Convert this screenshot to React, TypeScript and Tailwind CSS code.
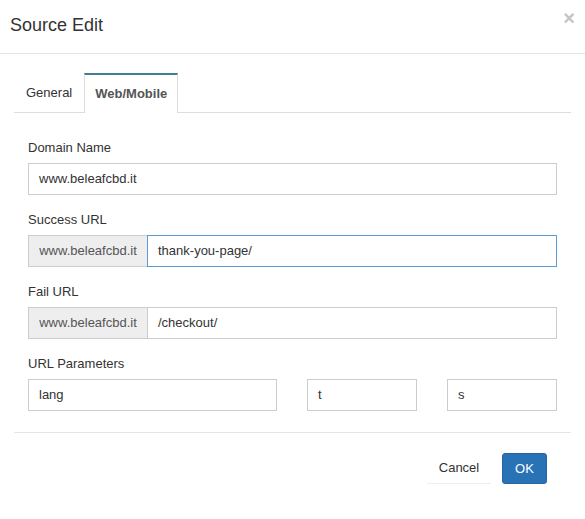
import React from "react";

function Label({ children }: { children: React.ReactNode }) {
  return <div className="leading-[20px] mb-[5px] text-[#333]">{children}</div>;
}

function Input({ value, focus = false, className = "" }: { value: string; focus?: boolean; className?: string }) {
  return (
    <div
      className={
        "h-[32px] flex items-center px-[10px] border bg-white text-[#333] " +
        (focus ? "border-[#5b9ad6] " : "border-[#cccccc] ") +
        className
      }
    >
      {value}
    </div>
  );
}

function Addon({ text }: { text: string }) {
  return (
    <div className="h-[32px] w-[120px] shrink-0 flex items-center justify-center border border-[#cccccc] bg-[#eeeeee] text-[#555]">
      {text}
    </div>
  );
}

export default function App() {
  return (
    <div className="w-[585px] h-[519px] bg-white text-[13px] text-[#333] font-['Liberation_Sans',Arial,sans-serif]">
      <div className="h-[54px] border-b border-[#e5e5e5] flex items-start justify-between pl-[10px] pr-[10px]">
        <div className="pt-[15px] text-[18px] leading-[20px] text-[#333]">Source Edit</div>
        <div className="pt-[8px] text-[20px] leading-[20px] font-bold text-[#c4c4c4]">×</div>
      </div>
      <div className="px-[14px]">
        <div className="mt-[19px] flex border-b border-[#dddddd] h-[40px]">
          <div className="h-[40px] flex items-center px-[12px] text-[#333]">General</div>
          <div className="h-[40px] -mb-px flex items-center px-[10px] bg-white border-x border-[#dddddd] border-t-2 border-t-[#3f7f8f] font-bold text-[#555]">
            Web/Mobile
          </div>
        </div>
        <div className="px-[14px] pt-[25px] pb-[6px]">
          <div className="mb-[15px]">
            <Label>Domain Name</Label>
            <Input value="www.beleafcbd.it" />
          </div>
          <div className="mb-[15px]">
            <Label>Success URL</Label>
            <div className="flex">
              <Addon text="www.beleafcbd.it" />
              <Input value="thank-you-page/" focus className="flex-1 -ml-px" />
            </div>
          </div>
          <div className="mb-[15px]">
            <Label>Fail URL</Label>
            <div className="flex">
              <Addon text="www.beleafcbd.it" />
              <Input value="/checkout/" className="flex-1 -ml-px" />
            </div>
          </div>
          <div className="mb-[15px]">
            <Label>URL Parameters</Label>
            <div className="grid grid-cols-[1fr_110px_110px] gap-[30px]">
              <Input value="lang" />
              <Input value="t" />
              <Input value="s" />
            </div>
          </div>
        </div>
        <div className="border-t border-[#e5e5e5] pt-[20px] pr-[24px] flex justify-end gap-[11px]">
          <button className="h-[31px] w-[64px] flex items-center justify-center text-[#333] border-b border-[#eeeeee]">
            Cancel
          </button>
          <button className="h-[31px] w-[45px] flex items-center justify-center rounded-[3px] bg-[#2a72b6] text-white border border-[#2465a3]">
            OK
          </button>
        </div>
      </div>
    </div>
  );
}
